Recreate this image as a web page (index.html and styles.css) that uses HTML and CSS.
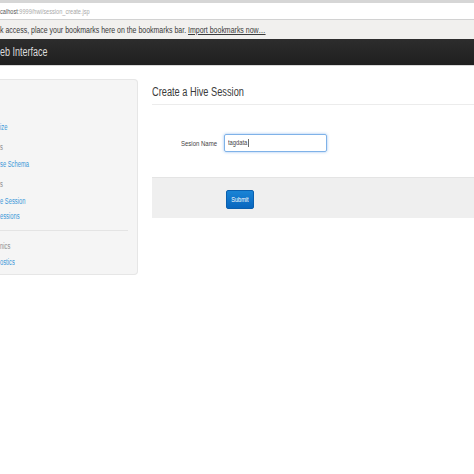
FILE: index.html
```html
<!DOCTYPE html>
<html>
<head>
<meta charset="utf-8">
<link rel="stylesheet" href="styles.css">
</head>
<body>
<div class="chrome">
  <div class="urlbar"><span class="sq url"><span class="host">calhost</span><span class="path">:9999/hwi/session_create.jsp</span></span></div>
  <div class="bookmarks"><span class="sq bm">k access, place your bookmarks here on the bookmarks bar. <span class="imp">Import bookmarks now…</span></span></div>
</div>
<div class="navbar"><span class="sq brand">eb Interface</span></div>
<div class="layout">
  <aside class="sidebar">
    <ul class="nav">
      <li class="nav-header first"></li>
      <li class="link"><span class="sq sn">ize</span></li>
      <li class="nav-header"><span class="sq sn">s</span></li>
      <li class="link"><span class="sq sn">se Schema</span></li>
      <li class="nav-header"><span class="sq sn">s</span></li>
      <li class="link"><span class="sq sn">e Session</span></li>
      <li class="link"><span class="sq sn">essions</span></li>
      <li class="divider"></li>
      <li class="nav-header last"><span class="sq sn">nics</span></li>
      <li class="link"><span class="sq sn">ostics</span></li>
    </ul>
  </aside>
  <main class="content">
    <h2 class="title"><span class="sq ttl">Create a Hive Session</span></h2>
    <form class="form">
      <div class="row">
        <label class="label"><span class="sq lbl">Sesion Name</span></label>
        <div class="input"><span class="sq inp">tagdata<span class="caret"></span></span></div>
      </div>
      <div class="form-actions"><button type="button" class="btn"><span class="sq btx">Submit</span></button></div>
    </form>
  </main>
</div>
</body>
</html>
```
FILE: styles.css
```css
html, body {
  margin: 0;
  padding: 0;
  width: 474px;
  height: 474px;
  overflow: hidden;
  background: #fff;
  font-family: "Liberation Sans", Arial, sans-serif;
}
.sq {
  display: inline-block;
  transform-origin: left center;
  white-space: nowrap;
}
.chrome {
  border-top: 3px solid #d6d6d6;
}
.urlbar {
  height: 16px;
  line-height: 18px;
  background: #fff;
  border-bottom: 1px solid #d2d2d2;
  font-size: 8px;
  white-space: nowrap;
}
.url { transform: scaleX(0.7); }
.host { color: #555; }
.path { color: #a8a8a8; }
.bookmarks {
  height: 19px;
  line-height: 21px;
  background: #f1f0ee;
  font-size: 9px;
  color: #3a3a3a;
  white-space: nowrap;
}
.bm { transform: scaleX(0.775); }
.imp { text-decoration: underline; }
.navbar {
  height: 26px;
  background: linear-gradient(#2d2d2d, #1f1f1f);
  border-bottom: 1px solid #d8d8d8;
  display: flex;
  align-items: center;
}
.brand {
  color: #dcdcdc;
  font-size: 12.5px;
  transform: scaleX(0.72);
}
.layout {
  display: flex;
  align-items: flex-start;
}
.sidebar {
  margin-top: 13px;
  width: 137px;
  height: 194px;
  background: #f5f5f5;
  border: 1px solid #e6e6e6;
  border-left: none;
  border-radius: 0 4px 4px 0;
  flex: none;
}
.nav {
  list-style: none;
  margin: 0;
  padding: 18px 0 0 0;
  font-size: 8.5px;
}
.nav li {
  line-height: 15px;
  height: 15px;
  white-space: nowrap;
}
.sn { transform: scaleX(0.68); }
.nav-header {
  color: #8c8c8c;
  margin-top: 5px;
  margin-bottom: 2px;
}
.nav .last { margin-top: 8px; margin-bottom: 1px; }
.nav .link { color: #3a97d8; }
.nav .divider {
  height: 1px;
  line-height: 1px;
  background: #e4e4e4;
  margin: 6px 0 0 0;
  width: 128px;
}
.content {
  flex: 1;
  margin-left: 14px;
}
.title {
  margin: 18px 0 0 0;
  font-weight: normal;
  font-size: 12px;
  line-height: 16px;
  color: #3a3a3a;
  padding-bottom: 4px;
  border-bottom: 1px solid #ececec;
}
.ttl { transform: scaleX(0.77); }
.form { margin: 0; }
.row {
  display: flex;
  align-items: center;
  margin-top: 29px;
}
.label {
  width: 65px;
  text-align: right;
  font-size: 8px;
  color: #444;
  margin-right: 7px;
}
.lbl { transform: scaleX(0.75); transform-origin: right center; }
.input {
  box-sizing: border-box;
  width: 103px;
  height: 18px;
  border: 1px solid #7fb2e8;
  border-radius: 2px;
  box-shadow: 0 0 3px rgba(82, 150, 230, 0.6);
  font-size: 8px;
  line-height: 16px;
  padding-left: 3px;
  color: #444;
  display: flex;
  align-items: center;
}
.inp { transform: scaleX(0.72); }
.caret {
  display: inline-block;
  width: 1px;
  height: 8px;
  background: #333;
  margin-left: 1px;
  vertical-align: middle;
}
.form-actions {
  margin-top: 25px;
  height: 41px;
  box-sizing: border-box;
  background: #efefef;
  border-top: 1px solid #e4e4e4;
  padding: 10px 0 0 74px;
}
.btn {
  height: 19px;
  width: 28px;
  padding: 0;
  border: 1px solid #0a5fae;
  border-radius: 2px;
  background: linear-gradient(#1a84d6, #0866be);
  color: #fff;
  font-family: inherit;
  font-size: 7px;
  line-height: 17px;
}
.btx { transform: scaleX(0.8); transform-origin: center; }
```
